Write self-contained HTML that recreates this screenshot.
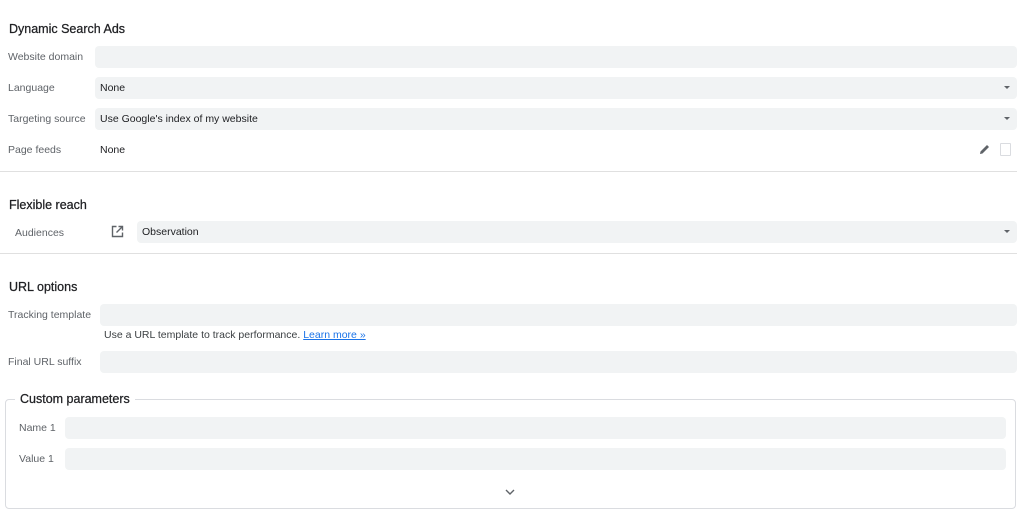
<!DOCTYPE html>
<html><head><meta charset="utf-8"><style>
*{margin:0;padding:0;box-sizing:border-box}
body{width:1024px;height:520px;background:#fff;font-family:"Liberation Sans",Arial,sans-serif;position:relative;overflow:hidden;color:#3c4043}
.a{position:absolute;white-space:nowrap}
.h{font-size:12.5px;color:#202124;-webkit-text-stroke:0.25px #202124}
.l{font-size:10.5px;color:#5f6368}
.in{position:absolute;background:#f1f3f4;border-radius:4px;height:22px}
.v{font-size:10.5px;color:#202124;position:absolute;left:5px;top:5px}
.dd{position:absolute;right:7px;top:9px;width:0;height:0;border-left:3.5px solid transparent;border-right:3.5px solid transparent;border-top:3.5px solid #5f6368}
.hr{position:absolute;left:0;width:1017px;height:1px;background:#e0e0e0}
</style></head><body>
<div class="a h" style="left:9px;top:22px">Dynamic Search Ads</div>
<div class="a l" style="left:8px;top:51px">Website domain</div>
<div class="in" style="left:95px;top:46px;width:922px"></div>
<div class="a l" style="left:8px;top:82px">Language</div>
<div class="in" style="left:95px;top:77px;width:922px"><span class="v">None</span><span class="dd"></span></div>
<div class="a l" style="left:8px;top:113px">Targeting source</div>
<div class="in" style="left:95px;top:108px;width:922px"><span class="v">Use Google's index of my website</span><span class="dd"></span></div>
<div class="a l" style="left:8px;top:144px">Page feeds</div>
<div class="a" style="left:100px;top:144px;font-size:10.5px;color:#202124">None</div>
<svg class="a" style="left:978px;top:143px" width="13" height="13" viewBox="0 0 13 13"><path d="M2 11 L2.5 8.5 L9 2 L11 4 L4.5 10.5 Z" fill="#5f6368"/></svg>
<div class="a" style="left:1000px;top:143px;width:11px;height:13px;border:1px solid #dadce0;border-radius:1px"></div>
<div class="hr" style="top:171px"></div>
<div class="a h" style="left:9px;top:198px">Flexible reach</div>
<div class="a l" style="left:15px;top:227px">Audiences</div>
<svg class="a" style="left:111px;top:225px" width="13" height="13" viewBox="0 0 13 13" fill="none" stroke="#5f6368" stroke-width="1.4"><path d="M5.5 1.5H1.5V11.5H11.5V7.5"/><path d="M7.5 1.5H11.5V5.5M11.5 1.5L5.5 7.5"/></svg>
<div class="in" style="left:137px;top:221px;width:880px"><span class="v">Observation</span><span class="dd"></span></div>
<div class="hr" style="top:253px"></div>
<div class="a h" style="left:9px;top:280px">URL options</div>
<div class="a l" style="left:8px;top:309px">Tracking template</div>
<div class="in" style="left:100px;top:304px;width:917px"></div>
<div class="a" style="left:104px;top:329px;font-size:10.5px;color:#3c4043">Use a URL template to track performance. <span style="color:#1a73e8;text-decoration:underline">Learn more »</span></div>
<div class="a l" style="left:8px;top:356px">Final URL suffix</div>
<div class="in" style="left:100px;top:351px;width:917px"></div>
<div class="a" style="left:5px;top:399px;width:1011px;height:110px;border:1px solid #dadce0;border-radius:4px"></div>
<div class="a h" style="left:15px;top:392px;background:#fff;padding:0 5px">Custom parameters</div>
<div class="a l" style="left:19px;top:422px">Name 1</div>
<div class="in" style="left:65px;top:417px;width:941px"></div>
<div class="a l" style="left:19px;top:453px">Value 1</div>
<div class="in" style="left:65px;top:448px;width:941px"></div>
<svg class="a" style="left:504px;top:488px" width="12" height="8" viewBox="0 0 12 8" fill="none" stroke="#5f6368" stroke-width="1.4"><path d="M2 2L6 6L10 2"/></svg>
</body></html>
